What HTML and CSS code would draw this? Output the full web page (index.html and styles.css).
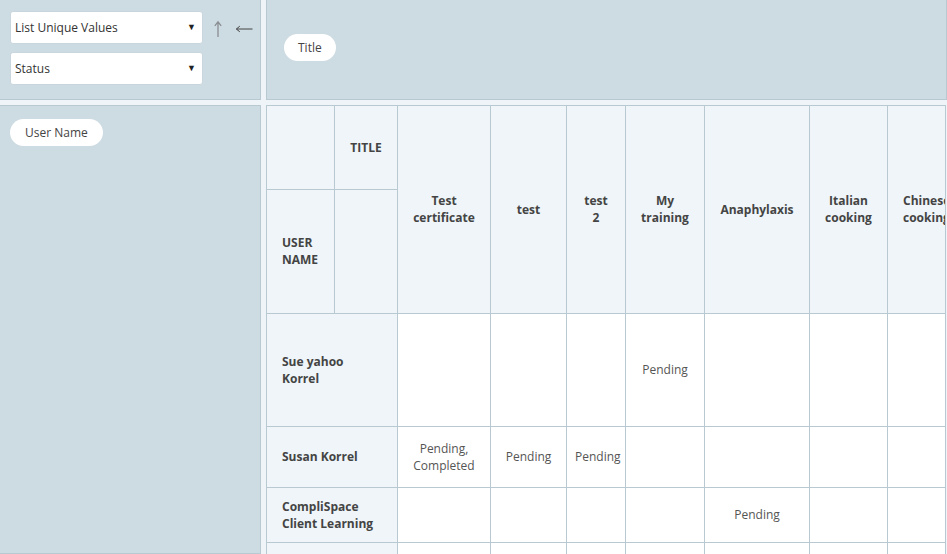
FILE: index.html
```html
<!DOCTYPE html>
<html>
<head>
<meta charset="utf-8">
<link rel="stylesheet" href="styles.css">
</head>
<body>
<div class="layout">
  <div class="panel controls">
    <div class="control-col">
      <div class="select"><span>List Unique Values</span><span class="caret">&#9660;</span></div>
      <div class="select"><span>Status</span><span class="caret">&#9660;</span></div>
    </div>
    <div class="arrows">
      <svg class="arrow-up" width="10" height="18" viewBox="0 0 10 18"><path d="M5 17V2M1.8 5.8L5 1.8 8.2 5.8" fill="none" stroke="#8a8f93" stroke-width="1.3"/></svg>
      <svg class="arrow-left" width="18" height="10" viewBox="0 0 18 10"><path d="M17.5 5H1.5M4.8 2.2L1.3 5 4.8 7.8" fill="none" stroke="#444" stroke-width="1"/></svg>
    </div>
  </div>
  <div class="panel col-zone"><span class="pill">Title</span></div>
  <div class="panel row-zone"><span class="pill">User Name</span></div>
  <div class="table-wrap">
    <table class="pivot">
      <colgroup>
        <col style="width:68px"><col style="width:63px"><col style="width:93px"><col style="width:76px"><col style="width:59px"><col style="width:79px"><col style="width:105px"><col style="width:78px"><col style="width:80px">
      </colgroup>
      <thead>
        <tr class="h1">
          <th class="axis"></th>
          <th class="axis center">TITLE</th>
          <th rowspan="2">Test<br>certificate</th>
          <th rowspan="2">test</th>
          <th rowspan="2">test<br>2</th>
          <th rowspan="2">My<br>training</th>
          <th rowspan="2">Anaphylaxis</th>
          <th rowspan="2">Italian<br>cooking</th>
          <th rowspan="2" class="clip">Chinese<br>cooking</th>
        </tr>
        <tr class="h2">
          <th class="axis left">USER<br>NAME</th>
          <th class="axis"></th>
        </tr>
      </thead>
      <tbody>
        <tr class="r1">
          <th colspan="2" class="name">Sue yahoo<br>Korrel</th>
          <td></td><td></td><td></td><td>Pending</td><td></td><td></td><td></td>
        </tr>
        <tr class="r2">
          <th colspan="2" class="name">Susan Korrel</th>
          <td>Pending,<br>Completed</td><td>Pending</td><td>Pending</td><td></td><td></td><td></td><td></td>
        </tr>
        <tr class="r3">
          <th colspan="2" class="name">CompliSpace<br>Client Learning</th>
          <td></td><td></td><td></td><td></td><td>Pending</td><td></td><td></td>
        </tr>
        <tr class="r4">
          <th colspan="2" class="name"></th>
          <td></td><td></td><td></td><td></td><td></td><td></td><td></td>
        </tr>
      </tbody>
    </table>
  </div>
</div>
</body>
</html>
```

FILE: styles.css
```css
html, body {
  margin: 0;
  padding: 0;
  background: #eef4f7;
  overflow: hidden;
}
body {
  font-family: "Open Sans", "Liberation Sans", sans-serif;
  font-size: 12px;
  color: #444;
}
.layout {
  display: grid;
  grid-template-columns: 262px 1fr;
  grid-template-rows: 101px 1fr;
  gap: 5px;
  margin: -1px 0 0 -1px;
  height: calc(100vh + 1px);
}
.panel {
  background: #cddbe2;
  border: 1px solid #b8c9d2;
  box-sizing: border-box;
}
.controls {
  display: flex;
  align-items: flex-start;
  padding: 11px 0 0 10px;
}
.control-col {
  display: flex;
  flex-direction: column;
  gap: 8px;
}
.select {
  width: 193px;
  height: 33px;
  box-sizing: border-box;
  background: #fff;
  border: 1px solid #c9d6dd;
  border-radius: 3px;
  display: flex;
  align-items: center;
  justify-content: space-between;
  padding: 0 6px 0 4px;
  color: #333;
}
.caret {
  font-size: 9px;
  color: #222;
  margin-top: -2px;
}
.arrows {
  display: flex;
  align-items: center;
  gap: 12px;
  margin-left: 10px;
  margin-top: 9px;
}
.arrow-up { display: block; }
.arrow-left { display: block; }
.col-zone {
  display: flex;
  align-items: center;
  padding: 0 0 4px 17px;
}
.row-zone {
  padding: 13px 10px;
}
.pill {
  display: inline-flex;
  align-items: center;
  height: 27px;
  padding: 0 14px;
  background: #fff;
  border-radius: 14px;
  color: #444;
  box-sizing: border-box;
}
.row-zone .pill { padding: 0 15px; }
.table-wrap {
  overflow: hidden;
  margin-right: 1px;
  border-right: 1px solid #b8c9d2;
  background: #eef4f7;
}
.pivot {
  border-collapse: collapse;
  table-layout: fixed;
  width: 701px;
  color: #555;
}
.pivot th, .pivot td {
  border: 1px solid #b8c9d2;
  padding: 0 8px 1px;
  text-align: center;
  vertical-align: middle;
  line-height: 17px;
}
.pivot th {
  background: #eff5f8;
  color: #444;
  font-weight: 700;
}
.pivot td {
  background: #fff;
}
.pivot th.left, .pivot th.name {
  text-align: left;
  padding-left: 15px;
}
.pivot th.clip {
  white-space: nowrap;
  text-align: left;
  padding-left: 15px;
}
.h1 { height: 84px; }
.h2 { height: 124px; }
.r1 { height: 113px; }
.r2 { height: 61px; }
.r3 { height: 55px; }
.r4 { height: 60px; }
```
